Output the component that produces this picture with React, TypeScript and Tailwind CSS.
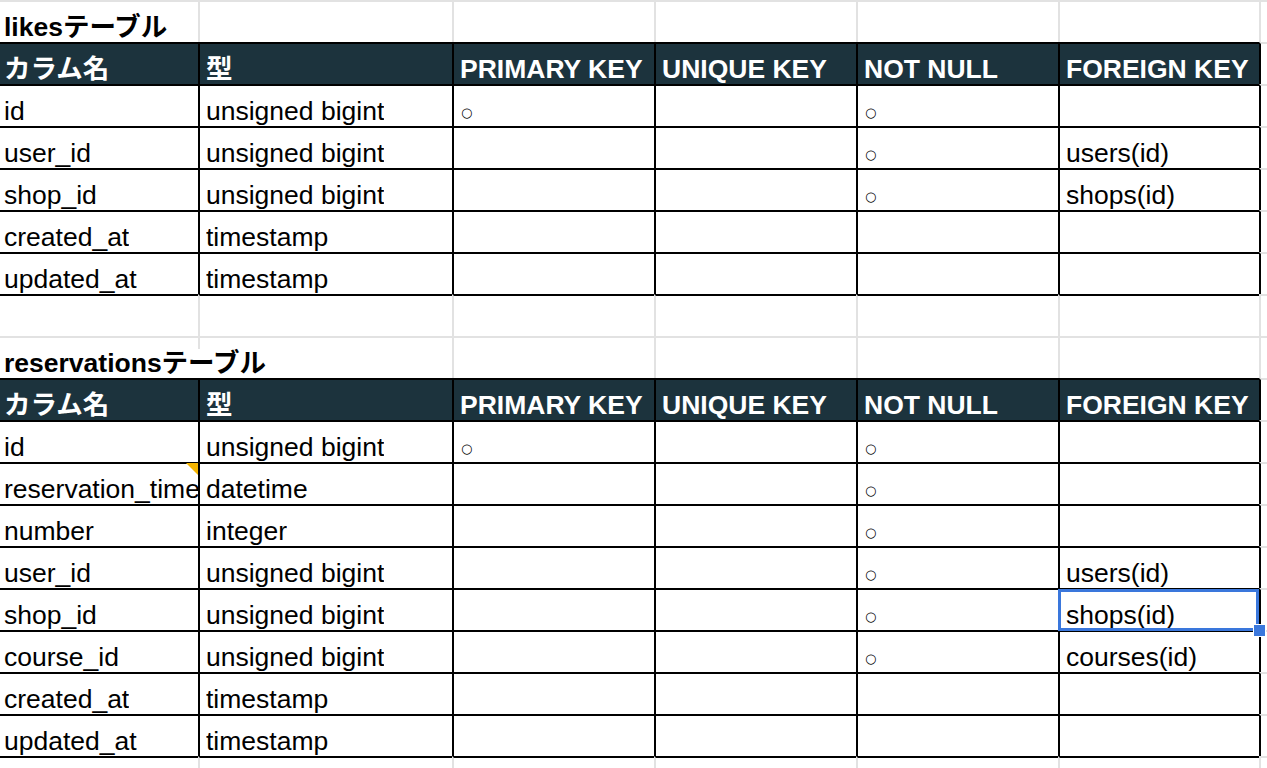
import React from "react";

type Kind = "title" | "header" | "data" | "blank";
type Row = { kind: Kind; cells: string[]; flag?: boolean; select?: boolean };

const HEAD = ["カラム名", "型", "PRIMARY KEY", "UNIQUE KEY", "NOT NULL", "FOREIGN KEY"];
const O = "○";

const rows: Row[] = [
  { kind: "title", cells: ["likesテーブル"] },
  { kind: "header", cells: HEAD },
  { kind: "data", cells: ["id", "unsigned bigint", O, "", O, ""] },
  { kind: "data", cells: ["user_id", "unsigned bigint", "", "", O, "users(id)"] },
  { kind: "data", cells: ["shop_id", "unsigned bigint", "", "", O, "shops(id)"] },
  { kind: "data", cells: ["created_at", "timestamp", "", "", "", ""] },
  { kind: "data", cells: ["updated_at", "timestamp", "", "", "", ""] },
  { kind: "blank", cells: [] },
  { kind: "title", cells: ["reservationsテーブル"] },
  { kind: "header", cells: HEAD },
  { kind: "data", cells: ["id", "unsigned bigint", O, "", O, ""] },
  { kind: "data", cells: ["reservation_time", "datetime", "", "", O, ""], flag: true },
  { kind: "data", cells: ["number", "integer", "", "", O, ""] },
  { kind: "data", cells: ["user_id", "unsigned bigint", "", "", O, "users(id)"] },
  { kind: "data", cells: ["shop_id", "unsigned bigint", "", "", O, "shops(id)"], select: true },
  { kind: "data", cells: ["course_id", "unsigned bigint", "", "", O, "courses(id)"] },
  { kind: "data", cells: ["created_at", "timestamp", "", "", "", ""] },
  { kind: "data", cells: ["updated_at", "timestamp", "", "", "", ""] },
  { kind: "blank", cells: [] },
];

const isTable = (k: number) => {
  const r = rows[k];
  return !!r && (r.kind === "header" || r.kind === "data");
};

function Cell({ row, k, c }: { row: Row; k: number; c: number }) {
  const text = row.cells[c] ?? "";
  const topBlack = c < 6 && (isTable(k) || isTable(k - 1));
  const leftBlack = c >= 1 && isTable(k);
  const header = row.kind === "header" && c < 6;
  const cls = [
    "relative h-[42px] border-t-2 flex items-end",
    topBlack ? "border-t-black" : "border-t-[#e2e2e2]",
    c === 0 ? "pl-[4px]" : "border-l-2 pl-[6px]",
    c >= 1 ? (leftBlack ? "border-l-black" : "border-l-[#e2e2e2]") : "",
    header ? "bg-[#1c333d] text-white font-bold pb-0" : "",
    row.kind === "title" ? "font-bold pb-0" : "",
    row.kind === "data" ? "pb-0" : "",
  ].join(" ");
  return (
    <div className={cls}>
      {text === O ? (
        <span className="pl-[1px] pb-[6px] font-['DejaVu_Sans',sans-serif] text-[13px] leading-[14px]">○</span>
      ) : (
        <span className="block min-w-0 whitespace-nowrap overflow-hidden leading-[29px]">{text}</span>
      )}
      {row.flag && c === 0 && (
        <div className="absolute right-0 -top-[1px] w-0 h-0 border-t-[12px] border-t-[#f4b400] border-l-[12px] border-l-transparent" />
      )}
      {row.select && c === 5 && (
        <>
          <div className="absolute z-20 -left-[2px] top-[-1px] w-[201px] h-[42px] border-[3px] border-[#3a77dc]" />
          <div className="absolute z-30 left-[193px] top-[34px] w-[13px] h-[13px] bg-[#3a77dc] border border-white" />
        </>
      )}
    </div>
  );
}

export default function App() {
  return (
    <div className="w-[1267px] h-[768px] overflow-hidden bg-white text-black text-[26.5px] font-['Liberation_Sans','Noto_Sans_CJK_JP',sans-serif]">
      <div className="grid grid-cols-[198px_254px_202px_202px_202px_201px_1fr]">
        {rows.map((row, k) =>
          [0, 1, 2, 3, 4, 5, 6].map((c) => {
            if (row.kind === "title" && c === 0) {
              return (
                <div
                  key={`${k}-${c}`}
                  className={`relative h-[42px] border-t-2 ${isTable(k - 1) ? "border-t-black" : "border-t-[#e2e2e2]"} flex items-end pl-[4px] font-bold whitespace-nowrap z-10`}
                >
                  <span className="leading-[29px] bg-white pr-[2px]">{row.cells[0]}</span>
                </div>
              );
            }
            return <Cell key={`${k}-${c}`} row={row} k={k} c={c} />;
          })
        )}
      </div>
    </div>
  );
}
